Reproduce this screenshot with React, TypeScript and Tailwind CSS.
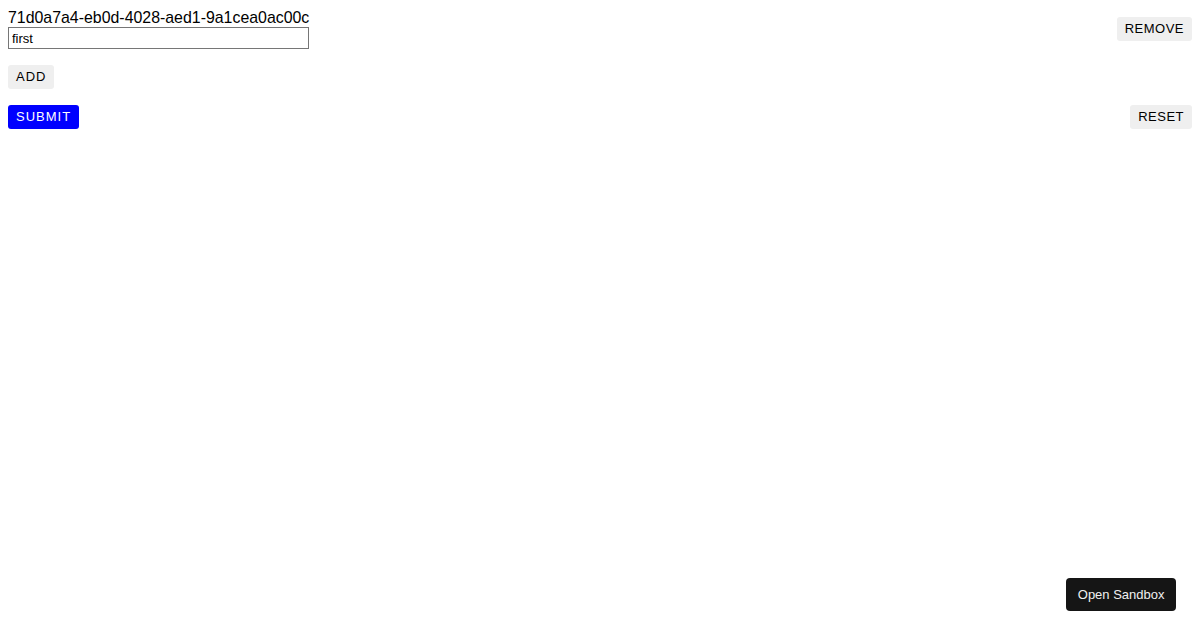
export default function App() {
  return (
    <div className="min-h-[630px] bg-white p-2 text-black" style={{ fontFamily: '"Liberation Sans", Arial, sans-serif' }}>
      {/* field row */}
      <div className="flex items-center justify-between">
        <div className="flex flex-col">
          <label className="text-[15.9px] leading-[19px]">71d0a7a4-eb0d-4028-aed1-9a1cea0ac00c</label>
          <input
            defaultValue="first"
            className="h-[22px] w-[301px] border border-[#767676] px-[3px] text-[13px] outline-none"
          />
        </div>
        <button className="h-6 rounded-[3px] bg-[#efefef] px-2 text-[13px] tracking-[0.5px]">REMOVE</button>
      </div>

      <div className="mt-[15px]">
        <button className="h-6 rounded-[3px] bg-[#efefef] px-2 text-[13px] tracking-[1px]">ADD</button>
      </div>

      <div className="mt-4 flex items-center justify-between">
        <button className="h-6 rounded-[3px] bg-[#0000ff] px-2 text-[13px] tracking-[1px] text-white">SUBMIT</button>
        <button className="h-6 rounded-[3px] bg-[#efefef] px-2 text-[13px] tracking-[0.5px]">RESET</button>
      </div>

      <button className="fixed bottom-[19px] right-6 h-[33px] rounded-[4px] bg-[#151515] px-[11.5px] text-[13px] text-[#f0f0f0]">
        Open Sandbox
      </button>
    </div>
  );
}
